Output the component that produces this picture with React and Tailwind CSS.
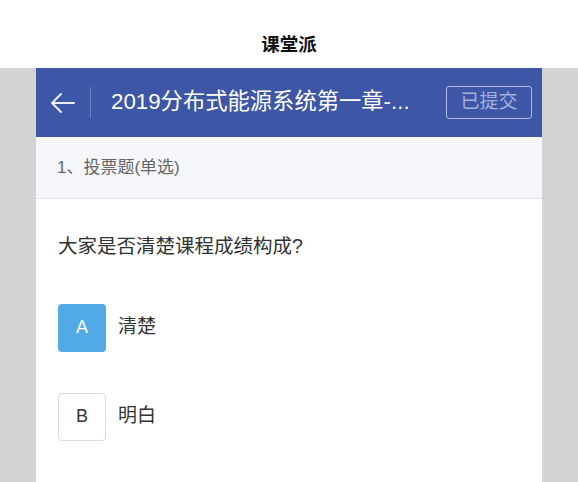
import React from 'react';

const options = [
  { key: 'A', label: '清楚', selected: true },
  { key: 'B', label: '明白', selected: false },
];

export default function App() {
  return (
    <div className="w-[578px] h-[482px] overflow-hidden flex flex-col bg-white" style={{ fontFamily: '"Liberation Sans", "Noto Sans CJK SC", sans-serif' }}>
      {/* 顶部标题栏 */}
      <div className="h-[68px] shrink-0 flex items-center justify-center pt-[22px]">
        <span className="text-[18.5px] font-bold text-[#111]">课堂派</span>
      </div>

      <div className="flex-1 bg-[#d3d3d3] px-[36px]">
        <div className="h-full bg-white flex flex-col">
          {/* 蓝色头部 */}
          <div className="h-[69px] shrink-0 bg-[#3d56a6] flex items-center pl-[14px] pr-[10px]">
            <svg width="26" height="22" viewBox="0 0 26 22" fill="none" stroke="#e8edfb" strokeWidth="2" strokeLinecap="round" strokeLinejoin="round">
              <path d="M24 11H2M11 2L2 11l9 9" />
            </svg>
            <div className="w-px h-[31px] bg-[#6d82c4] ml-[14px] mr-[20px]" />
            <div className="flex-1 text-white text-[22.3px] leading-none whitespace-nowrap">2019分布式能源系统第一章-...</div>
            <div className="w-[86px] h-[33px] border-[1.5px] border-[#aebbe6] rounded-[3px] flex items-center justify-center text-[#a3b1dc] text-[19px]">已提交</div>
          </div>

          {/* 题型 */}
          <div className="h-[62px] shrink-0 bg-[#f6f7fa] border-b border-[#e2e4ea] flex items-center pl-[21px] text-[17px] text-[#666]">
            1、投票题(单选)
          </div>

          {/* 题目 */}
          <div className="pl-[22px] pt-[38px]">
            <div className="text-[19.5px] text-[#333] leading-none">大家是否清楚课程成绩构成?</div>
            <div className="flex flex-col gap-[41px] mt-[47px]">
              {options.map(o => (
                <div key={o.key} className="flex items-center">
                  <div className={o.selected
                    ? 'w-[48px] h-[48px] rounded-[4px] bg-[#52aae6] text-white flex items-center justify-center text-[18px]'
                    : 'w-[48px] h-[48px] rounded-[4px] bg-white border border-[#dcdcdc] text-[#333] flex items-center justify-center text-[18px]'}>
                    {o.key}
                  </div>
                  <span className="ml-[12px] text-[19px] text-[#333]">{o.label}</span>
                </div>
              ))}
            </div>
          </div>
        </div>
      </div>
    </div>
  );
}
